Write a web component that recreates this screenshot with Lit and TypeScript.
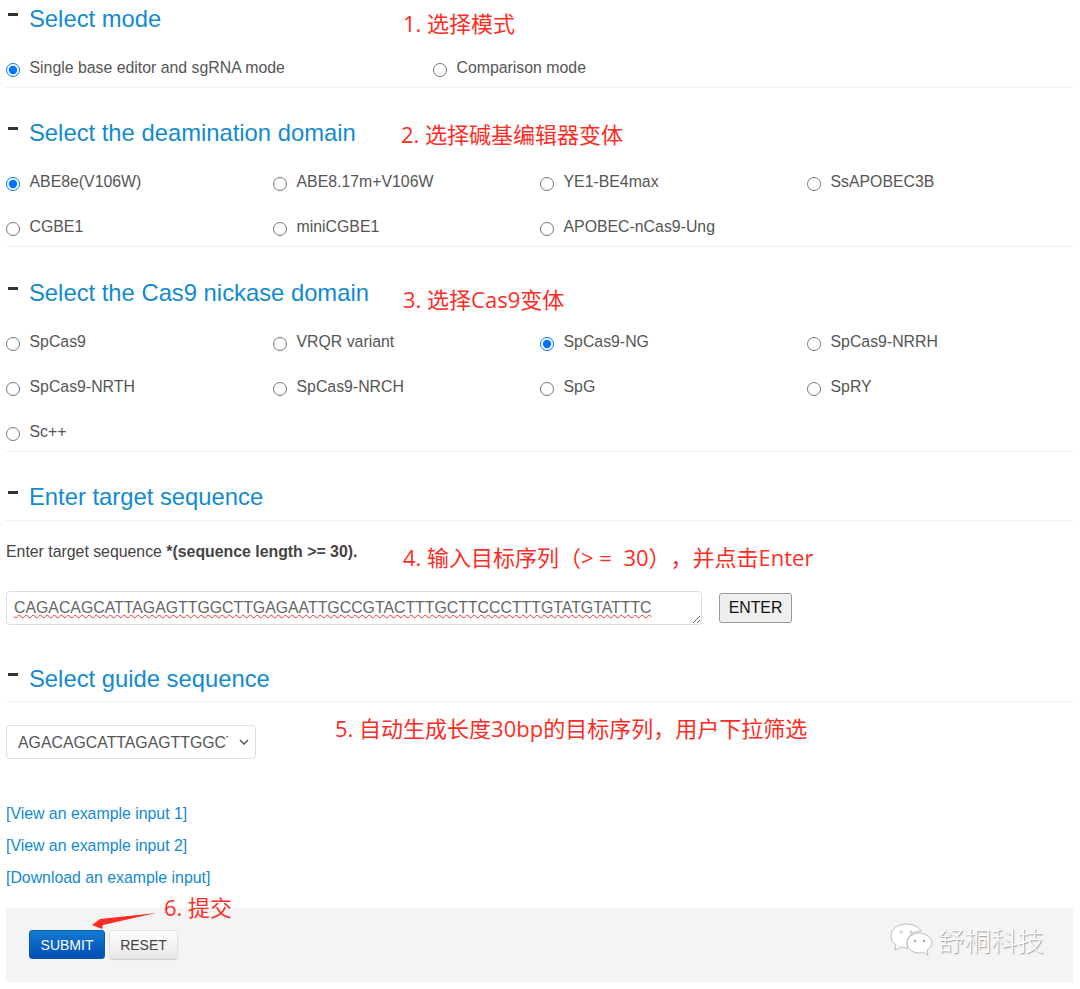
import { LitElement, html, css } from "lit";
import { customElement } from "lit/decorators.js";

const SEQ = "CAGACAGCATTAGAGTTGGCTTGAGAATTGCCGTACTTTGCTTCCCTTTGTATGTATTTC";

const notes = [
  { cls: "n1", t: "1. 选择模式" },
  { cls: "n2", t: "2. 选择碱基编辑器变体" },
  { cls: "n3", t: "3. 选择Cas9变体" },
  { cls: "n4", t: "4. 输入目标序列（> =  30），并点击Enter" },
  { cls: "n5", t: "5. 自动生成长度30bp的目标序列，用户下拉筛选" },
  { cls: "n6", t: "6. 提交" },
];

@customElement("app-root")
export class AppRoot extends LitElement {
  static styles = css`
    :host {
      display: block;
      position: relative;
      height: 989px;
      overflow: hidden;
      background: #fff;
      font-family: "Liberation Sans", Arial, sans-serif;
      font-size: 15.85px;
      color: #555;
    }
    .page { padding: 0 7px 0 6px; }
    .section { padding-top: 26px; }
    .section.first { padding-top: 0; }
    .section.cas { padding-top: 27px; }
    .section.guide { padding-top: 35px; }
    .head {
      display: flex;
      align-items: center;
      height: 38px;
      gap: 11px;
    }
    .minus {
      width: 10px;
      height: 3px;
      margin: -9px 0 0 2px;
      background: #333;
    }
    h2 {
      margin: 0;
      font-weight: 400;
      font-size: 23.8px;
      line-height: 38px;
      color: #128ad0;
    }
    .opts {
      display: grid;
      grid-template-columns: repeat(4, 267px);
      grid-auto-rows: 40px;
      row-gap: 5px;
      margin-top: 9px;
      border-bottom: 1px solid #eee;
    }
    .opts.two { grid-template-columns: 427px 427px; }
    label {
      display: flex;
      align-items: center;
      gap: 9.5px;
      box-sizing: border-box;
      padding-top: 2px;
      white-space: nowrap;
    }
    input[type="radio"] {
      width: 14px;
      height: 14px;
      margin: 4px 0 0 0;
      flex: none;
    }
    .rule { padding-bottom: 4px; border-bottom: 1px solid #eee; }
    .guide .rule { padding-bottom: 3px; }
    .hint { margin: 21px 0 0; line-height: 20px; color: #444; }
    .entry {
      display: flex;
      align-items: center;
      gap: 17px;
      margin-top: 29px;
    }
    textarea {
      box-sizing: border-box;
      width: 696px;
      height: 34px;
      padding: 6px 7px;
      border: 1px solid #ddd;
      border-radius: 4px;
      font: 15.85px/20px "Liberation Sans", Arial, sans-serif;
      color: #666;
      text-decoration: underline wavy #e33 1px;
      overflow: hidden;
      white-space: nowrap;
      outline: none;
    }
    .enter {
      width: 73px;
      height: 30px;
      padding: 0;
      border: 1px solid #999;
      border-radius: 3px;
      background: #efefef;
      font: 15.85px "Liberation Sans", Arial, sans-serif;
      color: #111;
    }
    select {
      display: block;
      box-sizing: border-box;
      width: 250px;
      height: 34px;
      margin-top: 23px;
      padding: 0 27px 0 11px;
      border: 1px solid #ddd;
      border-radius: 4px;
      appearance: none;
      background: #fff url("data:image/svg+xml,%3Csvg xmlns='http://www.w3.org/2000/svg' width='10' height='6'%3E%3Cpath d='M1 1l4 4 4-4' fill='none' stroke='%23555' stroke-width='1.5'/%3E%3C/svg%3E") no-repeat right 6px center;
      font: 15.85px "Liberation Sans", Arial, sans-serif;
      color: #555;
    }
    .links {
      display: grid;
      grid-auto-rows: 32px;
      margin-top: 39px;
    }
    .links a {
      align-self: center;
      color: #128ad0;
      text-decoration: none;
      line-height: 20px;
    }
    .footer {
      display: flex;
      justify-content: space-between;
      align-items: flex-start;
      box-sizing: border-box;
      height: 74px;
      margin-top: 14px;
      padding: 22px 29px 0 23px;
      background: #f4f4f4;
    }
    .btns { display: flex; gap: 4px; }
    .btn {
      height: 29px;
      padding: 0;
      border-radius: 3px;
      font: 14px "Liberation Sans", Arial, sans-serif;
    }
    .submit {
      width: 76px;
      border: 1px solid #0a5cb0;
      background: linear-gradient(#1379d0, #004fb4);
      color: #fff;
    }
    .reset {
      width: 69px;
      border: 1px solid #e2e2e2;
      background: linear-gradient(#fff, #e6e6e6);
      color: #444;
      box-shadow: 0 1px 1px #ccc;
    }
    .mark {
      display: flex;
      align-items: center;
      gap: 4px;
      margin-top: -8px;
    }
    .mark span {
      font: 300 26.5px/36px "Noto Sans CJK SC", sans-serif;
      color: #fff;
      text-shadow: 1px 1px 1px #999;
    }
    .note {
      position: absolute;
      margin: 0;
      font: 400 22px/30px "Open Sans", "Noto Sans CJK SC", sans-serif;
      color: #fe2c24;
      white-space: pre;
      text-spacing-trim: space-all;
    }
    .n1 { left: 403px; top: 8px; }
    .n2 { left: 401px; top: 119px; }
    .n3 { left: 403px; top: 284px; }
    .n4 { left: 403px; top: 542px; }
    .n5 { left: 335px; top: 713px; }
    .n6 { left: 164px; top: 892px; }
    .arrow { position: absolute; left: 85px; top: 905px; }
  `;

  private radio(name: string, text: string, checked = false) {
    return html`<label><input type="radio" name=${name} ?checked=${checked} />${text}</label>`;
  }

  private head(title: string, rule = false) {
    return html`<div class="head ${rule ? "rule" : ""}"><i class="minus"></i><h2>${title}</h2></div>`;
  }

  render() {
    return html`
      <div class="page">
        <section class="section first">
          ${this.head("Select mode")}
          <div class="opts two">
            ${this.radio("mode", "Single base editor and sgRNA mode", true)}
            ${this.radio("mode", "Comparison mode")}
          </div>
        </section>
        <section class="section">
          ${this.head("Select the deamination domain")}
          <div class="opts">
            ${["ABE8e(V106W)", "ABE8.17m+V106W", "YE1-BE4max", "SsAPOBEC3B", "CGBE1", "miniCGBE1", "APOBEC-nCas9-Ung"].map(
              (t, i) => this.radio("dom", t, i === 0)
            )}
          </div>
        </section>
        <section class="section cas">
          ${this.head("Select the Cas9 nickase domain")}
          <div class="opts">
            ${["SpCas9", "VRQR variant", "SpCas9-NG", "SpCas9-NRRH", "SpCas9-NRTH", "SpCas9-NRCH", "SpG", "SpRY", "Sc++"].map(
              (t, i) => this.radio("cas", t, i === 2)
            )}
          </div>
        </section>
        <section class="section">
          ${this.head("Enter target sequence", true)}
          <p class="hint">Enter target sequence <b>*(sequence length &gt;= 30).</b></p>
          <div class="entry">
            <textarea spellcheck="false" .value=${SEQ}></textarea>
            <button class="enter">ENTER</button>
          </div>
        </section>
        <section class="section guide">
          ${this.head("Select guide sequence", true)}
          <select><option>AGACAGCATTAGAGTTGGCTTGAGAATTGC</option></select>
        </section>
        <div class="links">
          <a href="#">[View an example input 1]</a>
          <a href="#">[View an example input 2]</a>
          <a href="#">[Download an example input]</a>
        </div>
        <div class="footer">
          <div class="btns">
            <button class="btn submit">SUBMIT</button>
            <button class="btn reset">RESET</button>
          </div>
          <div class="mark">
            <svg width="44" height="36" viewBox="0 0 44 36">
              <path d="M16 2C8 2 1 7 1 14c0 4 2 7 5 9l-1 5 6-3c1 0 3 1 5 1h2c-1-2-1-3-1-5 0-7 6-12 14-12C29 5 23 2 16 2z" fill="#fff" stroke="#bbb" />
              <path d="M29 11c-7 0-12 5-12 10s5 10 12 10c2 0 3 0 4-1l5 3-1-5c3-2 5-4 5-7 0-5-6-10-13-10z" fill="#fff" stroke="#bbb" />
              <circle cx="11" cy="10" r="1.5" fill="#ccc" /><circle cx="21" cy="10" r="1.5" fill="#ccc" />
              <circle cx="25" cy="19" r="1.3" fill="#aaa" /><circle cx="34" cy="19" r="1.3" fill="#aaa" />
            </svg>
            <span>舒桐科技</span>
          </div>
        </div>
      </div>
      ${notes.map((n) => html`<p class="note ${n.cls}">${n.t}</p>`)}
      <svg class="arrow" width="75" height="30" viewBox="0 0 75 30">
        <polygon points="71,8 15,14 7,20 17,24 18,20" fill="#fe2c24" />
      </svg>
    `;
  }
}
